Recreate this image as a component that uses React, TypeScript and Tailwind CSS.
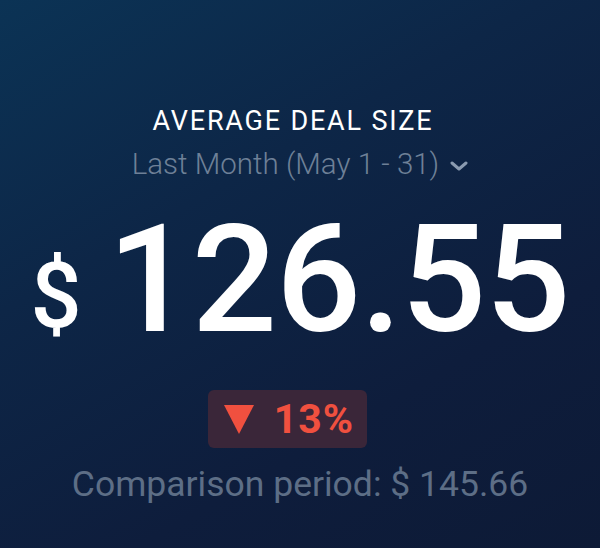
const ChevronDown = () => (
  <svg width="18" height="10" viewBox="0 0 18 10" fill="none" className="ml-[11px] mt-1">
    <path d="M2 2l7 6 7-6" stroke="#8a9ab0" strokeWidth="3" strokeLinecap="round" strokeLinejoin="round" />
  </svg>
);

export default function App() {
  return (
    <div className="w-[600px] h-[548px] overflow-hidden bg-[linear-gradient(150deg,#0b3355_0%,#0d2647_35%,#0e1d3c_70%,#0d1a36_100%)] font-['Roboto',sans-serif] flex flex-col items-center">
      <h2 className="mt-[103px] mr-[14px] text-[27px] leading-[36px] text-white tracking-[1.8px]">AVERAGE DEAL SIZE</h2>
      <button className="mt-[5px] flex items-center text-[29.5px] leading-[40px] font-light text-[#6e8097]">
        Last Month (May 1 - 31)
        <ChevronDown />
      </button>
      <div className="mt-[21px] flex items-baseline text-white font-medium">
        <span className="text-[90px] leading-none mr-[26px] relative top-[-4px]">$</span>
        <span className="text-[150px] leading-[150px] tracking-[-1px]">126.55</span>
      </div>
      <div className="mt-[35px] mr-[25px] flex items-center h-[58px] pl-[16px] pr-[13px] rounded-[6px] bg-[#3a2639] text-[#f0503f] font-bold">
        <svg width="30" height="29" viewBox="0 0 30 29" className="mr-[20px]">
          <path d="M0 0h30L15 29z" fill="#f0503f" />
        </svg>
        <span className="text-[41px] leading-none tracking-[1px]">13%</span>
      </div>
      <p className="mt-[14px] text-[35.5px] leading-[44px] text-[#5d6e86]">Comparison period: $ 145.66</p>
    </div>
  );
}
